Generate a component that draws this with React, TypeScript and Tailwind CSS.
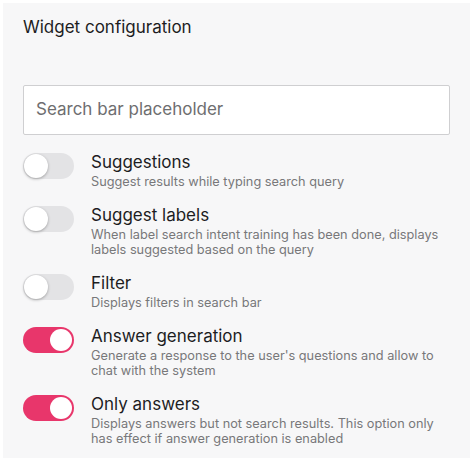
const options = [
  {
    title: 'Suggestions',
    description: 'Suggest results while typing search query',
    enabled: false,
  },
  {
    title: 'Suggest labels',
    description:
      'When label search intent training has been done, displays labels suggested based on the query',
    enabled: false,
  },
  {
    title: 'Filter',
    description: 'Displays filters in search bar',
    enabled: false,
  },
  {
    title: 'Answer generation',
    description: "Generate a response to the user's questions and allow to chat with the system",
    enabled: true,
  },
  {
    title: 'Only answers',
    description:
      'Displays answers but not search results. This option only has effect if answer generation is enabled',
    enabled: true,
  },
];

function Toggle({ on }: { on: boolean }) {
  return (
    <div
      className={
        on
          ? 'relative mt-[3px] h-[26px] w-[51px] shrink-0 rounded-full bg-[#e8366b]'
          : 'relative mt-[3px] h-[26px] w-[51px] shrink-0 rounded-full bg-[#e3e3e5]'
      }
    >
      <div
        className={
          on
            ? 'absolute right-[2px] top-[2px] h-[22px] w-[22px] rounded-full bg-white'
            : 'absolute left-[1px] top-[1px] h-[24px] w-[24px] rounded-full bg-white shadow-[0_1px_3px_rgba(0,0,0,0.3)]'
        }
      />
    </div>
  );
}

export default function App() {
  return (
    <div className="h-[462px] w-[474px] bg-white pl-[3px] pt-[3px]" style={{ fontFamily: 'Inter, "Noto Sans", sans-serif' }}>
      <div className="h-[455px] w-[467px] bg-[#f7f7f8] px-5 pt-3">
        {/* Header */}
        <h1 className="text-[17px] leading-6 text-[#1d1d1f]">Widget configuration</h1>

        {/* Search bar */}
        <div className="mt-[46px] flex h-[50px] items-center rounded-[2px] border border-[#cfcfd1] bg-white px-3">
          <span className="text-[17px] text-[#6e6e70]">Search bar placeholder</span>
        </div>

        {/* Options */}
        <div className="mt-[15px] flex flex-col gap-[14px]">
          {options.map((option) => (
            <div key={option.title} className="flex gap-[17px]">
              <Toggle on={option.enabled} />
              <div className="flex flex-col">
                <span className="text-[17px] leading-6 text-[#1d1d1f]">{option.title}</span>
                <span className="text-[12.75px] leading-[15px] text-[#78787a]">{option.description}</span>
              </div>
            </div>
          ))}
        </div>
      </div>
    </div>
  );
}
